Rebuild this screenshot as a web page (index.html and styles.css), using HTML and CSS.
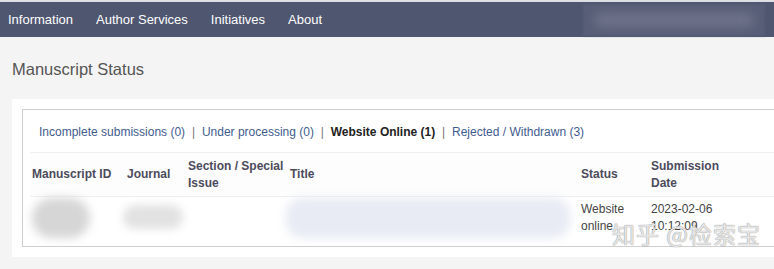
FILE: index.html
```html
<!DOCTYPE html>
<html lang="en">
<head>
    <meta charset="UTF-8">
    <meta name="viewport" content="width=device-width, initial-scale=1.0">
    <title>Manuscript Status</title>
    <link rel="stylesheet" href="styles.css">
</head>
<body>
    <div class="topbar">
        <nav class="menu">
            <a href="#">Information</a>
            <a href="#">Author Services</a>
            <a href="#">Initiatives</a>
            <a href="#">About</a>
        </nav>
        <div class="account"><span class="smudge"></span></div>
    </div>

    <div class="page">
        <h1>Manuscript Status</h1>
        <div class="panel">
            <div class="box">
                <div class="tabs">
                    <a href="#">Incomplete submissions (0)</a>
                    <span class="sep">|</span>
                    <a href="#">Under processing (0)</a>
                    <span class="sep">|</span>
                    <b>Website Online (1)</b>
                    <span class="sep">|</span>
                    <a href="#">Rejected / Withdrawn (3)</a>
                </div>
                <table class="list">
                    <thead>
                        <tr>
                            <th class="c-id">Manuscript ID</th>
                            <th class="c-journal">Journal</th>
                            <th class="c-section">Section / Special Issue</th>
                            <th class="c-title">Title</th>
                            <th class="c-status">Status</th>
                            <th class="c-date">Submission Date</th>
                            <th class="c-rest"></th>
                        </tr>
                    </thead>
                    <tbody>
                        <tr>
                            <td><span class="blur blur-id"></span></td>
                            <td><span class="blur blur-journal"></span></td>
                            <td></td>
                            <td><span class="blur blur-title"></span></td>
                            <td>Website online</td>
                            <td>2023-02-06 10:12:09</td>
                            <td></td>
                        </tr>
                    </tbody>
                </table>
            </div>
        </div>
    </div>

    <div class="watermark">知乎 @检索宝</div>
</body>
</html>
```

FILE: styles.css
```css
body {
    margin: 0;
    font-family: "Liberation Sans", Arial, sans-serif;
    background-color: #f4f4f4;
    color: #333;
    overflow: hidden;
    position: relative;
    height: 269px;
}
.topbar {
    display: flex;
    align-items: center;
    justify-content: space-between;
    height: 35px;
    border-top: 2px solid #dfe0e4;
    background-color: #4f566f;
}
.menu {
    display: flex;
    gap: 23px;
    padding-left: 8px;
}
.menu a {
    color: #fff;
    text-decoration: none;
    font-size: 13px;
}
.account {
    width: 182px;
    height: 32px;
    margin-right: 9px;
    background-color: #585e77;
    display: flex;
    align-items: center;
    justify-content: center;
    filter: blur(1px);
}
.smudge {
    width: 160px;
    height: 16px;
    border-radius: 8px;
    background-color: #6c7189;
    filter: blur(5px);
}
.page {
    padding: 22px 0 0 12px;
}
h1 {
    margin: 0 0 19px;
    font-size: 16.5px;
    font-weight: normal;
    color: #555;
    line-height: 21px;
}
.panel {
    background-color: #fff;
    padding: 10px 0 10px 10px;
}
.box {
    border: 1px solid #cfcfcf;
    border-right: none;
    padding: 0 0 7px 7px;
}
.tabs {
    font-size: 12px;
    padding: 15px 0 0 9px;
    height: 27px;
    color: #777;
}
.tabs a {
    color: #3f5c8f;
    text-decoration: none;
}
.tabs b {
    color: #222;
}
.sep {
    margin: 0 3.5px;
}
.list {
    border-collapse: collapse;
    table-layout: fixed;
    width: 800px;
    font-size: 12px;
}
.list th,
.list td {
    padding: 0 2px;
    text-align: left;
    vertical-align: middle;
    line-height: 17px;
}
.list th {
    height: 43px;
    color: #4b4b5c;
    border-top: 1px solid #f0f0f0;
    border-bottom: 1px solid #eeeeee;
    background-color: #fdfdfd;
}
.list td {
    height: 38px;
    color: #444;
    vertical-align: top;
    padding-top: 4px;
}
.c-id { width: 91px; }
.c-journal { width: 57px; }
.c-section { width: 98px; }
.c-title { width: 287px; }
.c-status { width: 66px; }
.c-date { width: 76px; }
.blur {
    display: block;
}
.blur-id {
    width: 58px;
    height: 40px;
    margin: -3px 0 0 0;
    border-radius: 24px;
    background-color: #d6d6d6;
    filter: blur(5px);
}
.blur-journal {
    width: 60px;
    height: 24px;
    margin: 4px 0 0 -4px;
    border-radius: 14px;
    background-color: #e2e2e2;
    filter: blur(4px);
}
.blur-title {
    width: 284px;
    height: 40px;
    margin: -3px 0 0 -4px;
    border-radius: 16px;
    background-color: #e8ebf4;
    filter: blur(5px);
}
.watermark {
    position: absolute;
    left: 612px;
    top: 216px;
    font-family: "Noto Sans CJK SC", sans-serif;
    font-size: 23px;
    color: rgba(255, 255, 255, 0.75);
    text-shadow: 0 0 1px #999, 0 0 1px #999;
    letter-spacing: 1px;
}
```
